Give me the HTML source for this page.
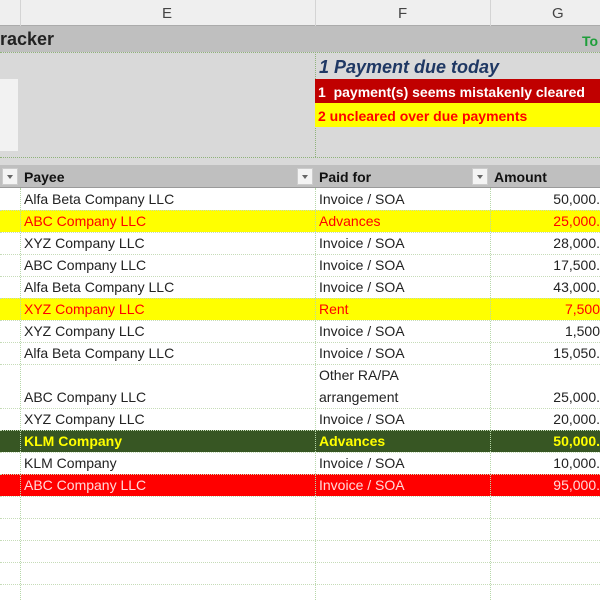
<!DOCTYPE html>
<html><head><style>
body{margin:0;width:600px;height:600px;overflow:hidden;background:#fff;font-family:"Liberation Sans",sans-serif;position:relative}
div{position:absolute;box-sizing:border-box}
.t{font-size:14px;white-space:nowrap;line-height:22px}
.vl{width:1px;border-left:1px dotted #b6d7a8}
.hl{height:1px;left:0;width:600px;border-top:1px dotted #c6dcb8}
.dd{width:16px;height:17px;background:#f4f4f4;border:1px solid #ccc;top:168px}
.dd:after{content:"";position:absolute;left:4px;top:6px;border-left:3px solid transparent;border-right:3px solid transparent;border-top:4px solid #666}
</style></head><body>
<div style="left:0;top:0;width:600px;height:26px;background:#efefef;border-bottom:1px solid #ababab"></div>
<div style="left:20px;top:0;height:26px;border-left:1px solid #d4d4d4"></div>
<div style="left:315px;top:0;height:26px;border-left:1px solid #d4d4d4"></div>
<div style="left:490px;top:0;height:26px;border-left:1px solid #d4d4d4"></div>
<div class="t" style="left:162px;top:3px;font-size:15px;color:#444">E</div>
<div class="t" style="left:398px;top:3px;font-size:15px;color:#444">F</div>
<div class="t" style="left:552px;top:3px;font-size:15px;color:#444">G</div>
<div style="left:0;top:26px;width:600px;height:26px;background:#bfbfbf"></div>
<div class="t" style="left:0;top:28px;font-size:18px;font-weight:bold;color:#222">racker</div>
<div class="t" style="left:582px;top:30px;font-size:14px;font-weight:bold;color:#1e9e3a">To</div>
<div style="left:0;top:52px;width:600px;height:113px;background:#d9d9d9;border-top:1px dotted #8fb27a"></div>
<div style="left:0;top:157px;width:600px;border-top:1px dotted #8fb27a"></div>
<div style="left:315px;top:52px;height:105px;border-left:1px dotted #8fb27a"></div>
<div style="left:0;top:79px;width:18px;height:72px;background:#f2f2f2"></div>
<div class="t" style="left:319px;top:56px;font-size:18px;font-style:italic;font-weight:bold;color:#1f3864">1 Payment due today</div>
<div style="left:315px;top:79px;width:285px;height:24px;background:#c00000"></div>
<div class="t" style="left:318px;top:81px;font-size:14px;font-weight:bold;color:#fff">1&nbsp; payment(s) seems mistakenly cleared</div>
<div style="left:315px;top:103px;width:285px;height:24px;background:#ffff00"></div>
<div class="t" style="left:318px;top:105px;font-size:14px;font-weight:bold;color:#ff0000">2 uncleared over due payments</div>
<div style="left:0;top:165px;width:600px;height:23px;background:#bfbfbf;border-bottom:1px solid #9a9a9a"></div>
<div class="dd" style="left:2px"></div><div class="dd" style="left:297px"></div><div class="dd" style="left:472px"></div>
<div class="t" style="left:24px;top:166px;font-weight:bold;color:#111">Payee</div>
<div class="t" style="left:319px;top:166px;font-weight:bold;color:#111">Paid for</div>
<div class="t" style="left:494px;top:166px;font-weight:bold;color:#111">Amount</div>

<div style="left:0;top:210px;width:600px;height:22px;background:#ffff00"></div>
<div style="left:0;top:298px;width:600px;height:22px;background:#ffff00"></div>
<div style="left:0;top:430px;width:600px;height:22px;background:#375623"></div>
<div style="left:0;top:474px;width:600px;height:22px;background:#ff0000"></div>

<div class="hl" style="top:210px"></div><div class="hl" style="top:232px"></div><div class="hl" style="top:254px"></div><div class="hl" style="top:276px"></div><div class="hl" style="top:298px"></div><div class="hl" style="top:320px"></div><div class="hl" style="top:342px"></div><div class="hl" style="top:364px"></div><div class="hl" style="top:408px"></div><div class="hl" style="top:430px"></div><div class="hl" style="top:452px"></div><div class="hl" style="top:474px"></div><div class="hl" style="top:496px"></div><div class="hl" style="top:518px"></div><div class="hl" style="top:540px"></div><div class="hl" style="top:562px"></div><div class="hl" style="top:584px"></div>
<div class="vl" style="left:20px;top:188px;height:412px"></div>
<div class="vl" style="left:315px;top:188px;height:412px"></div>
<div class="vl" style="left:490px;top:188px;height:412px"></div>

<div class="t" style="left:24px;top:188px;color:#222">Alfa Beta Company LLC</div><div class="t" style="left:319px;top:188px;color:#222">Invoice / SOA</div><div class="t" style="right:0;top:188px;color:#222">50,000.</div>
<div class="t" style="left:24px;top:210px;color:#ff0000">ABC Company LLC</div><div class="t" style="left:319px;top:210px;color:#ff0000">Advances</div><div class="t" style="right:0;top:210px;color:#ff0000">25,000.</div>
<div class="t" style="left:24px;top:232px;color:#222">XYZ Company LLC</div><div class="t" style="left:319px;top:232px;color:#222">Invoice / SOA</div><div class="t" style="right:0;top:232px;color:#222">28,000.</div>
<div class="t" style="left:24px;top:254px;color:#222">ABC Company LLC</div><div class="t" style="left:319px;top:254px;color:#222">Invoice / SOA</div><div class="t" style="right:0;top:254px;color:#222">17,500.</div>
<div class="t" style="left:24px;top:276px;color:#222">Alfa Beta Company LLC</div><div class="t" style="left:319px;top:276px;color:#222">Invoice / SOA</div><div class="t" style="right:0;top:276px;color:#222">43,000.</div>
<div class="t" style="left:24px;top:298px;color:#ff0000">XYZ Company LLC</div><div class="t" style="left:319px;top:298px;color:#ff0000">Rent</div><div class="t" style="right:0;top:298px;color:#ff0000">7,500</div>
<div class="t" style="left:24px;top:320px;color:#222">XYZ Company LLC</div><div class="t" style="left:319px;top:320px;color:#222">Invoice / SOA</div><div class="t" style="right:0;top:320px;color:#222">1,500</div>
<div class="t" style="left:24px;top:342px;color:#222">Alfa Beta Company LLC</div><div class="t" style="left:319px;top:342px;color:#222">Invoice / SOA</div><div class="t" style="right:0;top:342px;color:#222">15,050.</div>
<div class="t" style="left:319px;top:364px;color:#222">Other RA/PA</div>
<div class="t" style="left:24px;top:386px;color:#222">ABC Company LLC</div><div class="t" style="left:319px;top:386px;color:#222">arrangement</div><div class="t" style="right:0;top:386px;color:#222">25,000.</div>
<div class="t" style="left:24px;top:408px;color:#222">XYZ Company LLC</div><div class="t" style="left:319px;top:408px;color:#222">Invoice / SOA</div><div class="t" style="right:0;top:408px;color:#222">20,000.</div>
<div class="t" style="left:24px;top:430px;color:#ffff00;font-weight:bold">KLM Company</div><div class="t" style="left:319px;top:430px;color:#ffff00;font-weight:bold">Advances</div><div class="t" style="right:0;top:430px;color:#ffff00;font-weight:bold">50,000.</div>
<div class="t" style="left:24px;top:452px;color:#222">KLM Company</div><div class="t" style="left:319px;top:452px;color:#222">Invoice / SOA</div><div class="t" style="right:0;top:452px;color:#222">10,000.</div>
<div class="t" style="left:24px;top:474px;color:#ffd9d9">ABC Company LLC</div><div class="t" style="left:319px;top:474px;color:#ffd9d9">Invoice / SOA</div><div class="t" style="right:0;top:474px;color:#ffd9d9">95,000.</div>
</body></html>
